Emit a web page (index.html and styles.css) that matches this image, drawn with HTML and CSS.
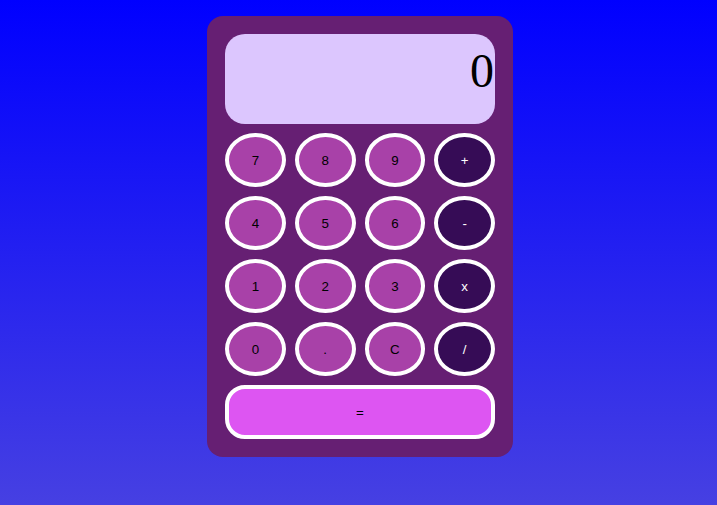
FILE: index.html
```html
<!DOCTYPE html>
<html>
<head>
<meta charset="utf-8">
<link rel="stylesheet" href="styles.css">
</head>
<body>
<div class="page">
  <div class="calc">
    <div class="display">0</div>
    <div class="keys">
      <button class="key">7</button>
      <button class="key">8</button>
      <button class="key">9</button>
      <button class="key op">+</button>
      <button class="key">4</button>
      <button class="key">5</button>
      <button class="key">6</button>
      <button class="key op">-</button>
      <button class="key">1</button>
      <button class="key">2</button>
      <button class="key">3</button>
      <button class="key op">x</button>
      <button class="key">0</button>
      <button class="key">.</button>
      <button class="key">C</button>
      <button class="key op">/</button>
      <button class="key equals">=</button>
    </div>
  </div>
</div>
</body>
</html>
```
FILE: styles.css
```css
html, body {
  margin: 0;
  padding: 0;
  height: 100%;
}
body {
  background: linear-gradient(to bottom, #0000ff 0%, #4640e2 100%);
  font-family: "Liberation Sans", Arial, sans-serif;
}
.page {
  display: flex;
  justify-content: center;
  padding-top: 16px;
}
.calc {
  width: 270px;
  padding: 18px;
  background: #661f73;
  border-radius: 16px;
  display: flex;
  flex-direction: column;
  gap: 9px;
  margin-left: 3px;
}
.display {
  height: 90px;
  box-sizing: border-box;
  background: #dcc6fe;
  border-radius: 20px;
  text-align: right;
  padding: 9px 1px 0 0;
  font-family: "Liberation Serif", "Times New Roman", serif;
  font-size: 48px;
  color: #000;
}
.keys {
  display: grid;
  grid-template-columns: repeat(4, 1fr);
  gap: 9px;
}
.key {
  height: 54px;
  box-sizing: border-box;
  border: 4px solid #ffffff;
  border-radius: 50%;
  background: #a841a8;
  color: #000;
  font-family: "Liberation Sans", Arial, sans-serif;
  font-size: 13.33px;
  padding: 0;
  margin: 0;
}
.key.op {
  background: #360c56;
  color: #ffffff;
}
.key.equals {
  grid-column: 1 / -1;
  border-radius: 20px;
  background: #dd55f2;
  color: #000;
}
```
